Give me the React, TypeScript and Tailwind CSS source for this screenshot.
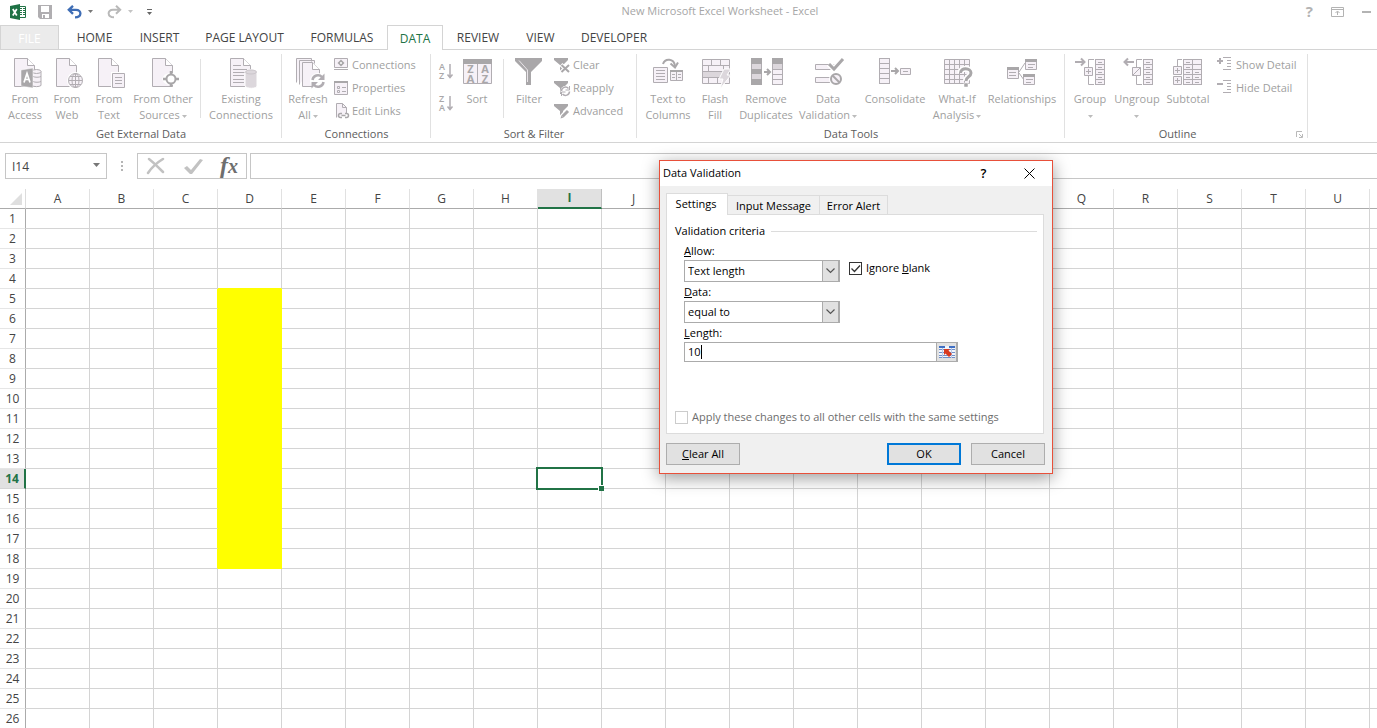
import { useState } from "react";
import type { ReactNode } from "react";

const COLUMNS = "ABCDEFGHIJKLMNOPQRSTU".split("");
const ROWS = Array.from({ length: 26 }, (_, i) => i + 1);

const LINE = "#b1adb2";
const PALE = "#f6f1f7";
const DARK = "#a9a7a9";
const MID = "#dcd7dc";

/* ---------- Icon pieces ---------- */

function Icon({ size = 32, children }: { size?: number; children: ReactNode }) {
  return (
    <svg
      width={size}
      height={size}
      viewBox={`0 0 ${size} ${size}`}
      fill="none"
      stroke={LINE}
      overflow="visible"
      className="shrink-0"
      aria-hidden="true"
    >
      {children}
    </svg>
  );
}

function Page() {
  return (
    <>
      <path d="M5.5 1.5h13l7 7v21h-20z" fill={PALE} />
      <path d="M18.5 1.5v7h7" fill="#fff" />
    </>
  );
}

function Cells({ x, y, w, h, rows, dash = false }: { x: number; y: number; w: number; h: number; rows: number; dash?: boolean }) {
  return (
    <>
      {Array.from({ length: rows }, (_, i) => (
        <g key={i}>
          <rect x={x + 0.5} y={y + i * h + 0.5} width={w} height={h} fill={PALE} />
          {dash && <path d={`M${x + 3} ${y + i * h + 3.5}h${w - 5}`} />}
        </g>
      ))}
    </>
  );
}

const AccessIcon = () => (
  <Icon>
    <Page />
    <path d="M23 14.5v14c2 1.500 7 1.500 9 0v-14" fill={PALE} />
    <ellipse cx="27.5" cy="14.5" rx="4.5" ry="2" fill={PALE} />
    <path d="M24 19.5c2 1 6 1 8 0M24 24.5c2 1 6 1 8 0" />
    <path d="M12 13l12-2v20l-12-2z" fill={DARK} stroke="#fff" strokeWidth="0.5" />
    <path d="M15 25.500l3-9 3 9M16 22.5h4" stroke="#fff" strokeWidth="1.7" />
  </Icon>
);

const WebIcon = () => (
  <Icon>
    <Page />
    <circle cx="24.5" cy="23.5" r="8.5" fill="#fff" stroke="none" />
    <circle cx="24.5" cy="23.5" r="7" fill={PALE} />
    <ellipse cx="24.5" cy="23.5" rx="3.5" ry="7" />
    <path d="M24.5 16.500v14M17.5 23.500h14M19 19.500h11M19 27.500h11" />
  </Icon>
);

const TextIcon = () => (
  <Icon>
    <Page />
    <path d="M18 15h14v17H18z" fill="#fff" stroke="none" />
    <path d="M19.5 16.500h12v14h-12z" fill={PALE} />
    <path d="M22 20.5h7M22 23.5h7M22 26.5h7" />
  </Icon>
);

const OtherIcon = () => (
  <Icon>
    <Page />
    <path d="M15 22a9 9 0 0 1 17 0 9 9 0 0 1-17 0" fill="#fff" stroke="none" />
    <circle cx="24" cy="22" r="4.5" strokeWidth="2" stroke={DARK} fill="#fff" />
    <path d="M24 14v4M24 26v4M16 22h4M28 22h4" strokeWidth="2.5" stroke={DARK} />
  </Icon>
);

const ExistingIcon = () => (
  <Icon>
    <Page />
    <path d="M8 8.5h8M8 12.5h14M8 15.5h14M8 18.5h11M8 22.5h11M8 25.5h11" />
    <path d="M20 15v14c1 3 12 3 12 0V15c0-3-12-3-12 0" fill={MID} stroke="#fff" />
    <ellipse cx="26" cy="15" rx="5.5" ry="2" fill={MID} stroke="#cbc6cb" />
  </Icon>
);

const RefreshIcon = () => (
  <Icon>
    <path d="M4.5 25.5v-24h15v3M7.5 27.5v-24h15v3" fill={PALE} />
    <path d="M10.5 5.5h10l7 7v17h-17z" fill={PALE} />
    <path d="M20.5 5.5v7h7" fill="#fff" />
    <circle cx="26" cy="24" r="8" fill="#fff" stroke="none" />
    <path d="M20.5 23a5.5 5.500 0 0 1 9.500-3M31.5 25a5.500 5.500 0 0 1-9.500 3" strokeWidth="2.5" />
    <path d="M32.5 16.500v6.500H26zM19.5 31.500V25H26z" fill={LINE} stroke="none" />
  </Icon>
);

const SortIcon = () => (
  <Icon>
    <path d="M2.5 3.5h28v23h-28z" fill={PALE} />
    <path d="M2 2h29v5H2z" fill={DARK} stroke="none" />
    <path d="M16.5 7v20" />
    <g fill={DARK} stroke="none" fontSize="11" fontWeight="700" textAnchor="middle">
      <text x="9.5" y="16">Z</text>
      <text x="9.5" y="26">A</text>
      <text x="24" y="16">A</text>
      <text x="24" y="26">Z</text>
    </g>
  </Icon>
);

const FilterIcon = () => (
  <Icon>
    <path d="M2 1h27v3L18 15v13h-5V15L2 4z" fill={DARK} stroke="none" />
    <path d="M6 3.5l8.5 9.500v12" stroke="#e9e5e9" />
  </Icon>
);

const TextToColumnsIcon = () => (
  <Icon>
    <path d="M1.5 10.5h14v15h-14z" fill={PALE} />
    <path d="M4 13.5h9M4 16.5h9M4 19.5h9M4 22.5h9" />
    <path d="M18.5 13.5h12v10h-12zM24.5 14v9M20 17.5h3M26 17.5h3M20 20.5h3M26 20.5h3" fill={PALE} />
    <path d="M18 14h13" strokeWidth="2" stroke={DARK} />
    <path d="M11 7c2-6 11-6 12 2" strokeWidth="2" stroke={DARK} />
    <path d="M18.5 6.500l4.500 4 3-5" strokeWidth="2" stroke={DARK} />
  </Icon>
);

const FlashFillIcon = () => (
  <Icon>
    <path d="M3.5 2.5h27v24h-27z" fill={PALE} />
    <path d="M4 15h26v5H4z" fill={MID} stroke="none" />
    <path d="M3.5 8.5h27M3.5 14.5h27M3.5 20.5h27M12.5 2.5v6M21.5 2.5v6M9.5 8.5v6M9.5 20.5v6M18.5 20.5v6M24.5 8.5v6" />
    <path d="M25 12h7l-4 6h4L21 32l3-10h-4z" fill={MID} stroke="#fff" />
  </Icon>
);

const RemoveDuplicatesIcon = () => (
  <Icon>
    <Cells x={1} y={1} w={10} h={5} rows={5} />
    <path d="M1 1h11v6H1zM1 12h11v5H1zM1 22h11v6H1z" fill={DARK} stroke="none" />
    <path d="M2 7h9v5H2zM2 17h9v5H2z" fill={MID} stroke="none" />
    <Cells x={22} y={2} w={10} h={5} rows={5} />
    <path d="M22 1h11v6H22z" fill={DARK} stroke="none" />
    <path d="M23 7h9v5h-9z" fill={MID} stroke="none" />
    <path d="M14 15h6M17 12l3 3-3 3" strokeWidth="2" stroke={DARK} />
  </Icon>
);

const ValidationIcon = () => (
  <Icon>
    <path d="M3.5 7.5h20v5h-20zM3.5 20.5h18v5h-18z" fill={PALE} />
    <path d="M17 7l5 5 9-10" stroke="#fff" strokeWidth="6" />
    <path d="M17 7l5 5 9-10" stroke={DARK} strokeWidth="3" />
    <circle cx="24" cy="22" r="7" fill="#fff" stroke="none" />
    <circle cx="24" cy="22" r="5" stroke={DARK} strokeWidth="2" fill={PALE} />
    <path d="M20.5 18.500l7 7" stroke={DARK} strokeWidth="2" />
  </Icon>
);

const ConsolidateIcon = () => (
  <Icon>
    <Cells x={0} y={1} w={10} h={5} rows={5} />
    <path d="M12 14h7M16 11l3 3-3 3" strokeWidth="2" stroke={DARK} />
    <path d="M21.5 11.5h10v6h-10zM24 14.5h5" fill={PALE} />
  </Icon>
);

const WhatIfIcon = () => (
  <Icon>
    <path d="M3.5 2.5h25v24h-25z" fill={PALE} />
    <path d="M8.5 2.5v24M13.5 2.5v24M18.5 2.5v24M23.5 2.5v24M3.5 7.5h25M3.5 12.5h25M3.5 17.5h25M3.5 22.5h25" />
    <path d="M19.5 16c0-6 10.500-5.500 10.500 0 0 4-5 3.500-5 8" strokeWidth="6" stroke="#fff" />
    <path d="M19.5 16c0-6 10.500-5.500 10.500 0 0 4-5 3.500-5 8" strokeWidth="3" stroke={DARK} />
    <path d="M23 26h4v4h-4z" fill={DARK} stroke="#fff" strokeWidth="0.5" />
  </Icon>
);

const RelationshipsIcon = () => (
  <Icon>
    <path d="M13 15l6-9M13 16l5 7" />
    <path d="M1.5 11.5h11v10h-11zM19.5 3.5h11v9h-11zM17.5 18.5h11v9h-11z" fill={PALE} />
    <path d="M1 11.5h12M19 3.5h12M17 18.5h12" strokeWidth="3" stroke={DARK} />
    <path d="M3 15.5h7M3 18.5h7M22 7.5h7M22 10.5h5M20 22.5h7M20 25.5h5" />
  </Icon>
);

const GroupIcon = () => (
  <Icon>
    <path d="M1 5h10M7 1.5L10.5 5 7 8.5" strokeWidth="2" />
    <path d="M20 2.5h-5.500v25H20" />
    <path d="M10.5 10.5h8v8h-8z" fill={PALE} />
    <path d="M12 14.5h5M14.5 12v5" />
    <Cells x={21} y={2} w={9} h={5} rows={5} dash />
  </Icon>
);

const UngroupIcon = () => (
  <Icon>
    <path d="M13 5H3M7 1.5L3.5 5 7 8.5" strokeWidth="2" />
    <path d="M21 2.5h-5.500v25H21" />
    <path d="M11.5 10.5h8v8h-8z" fill={PALE} />
    <path d="M11.5 18.5l8-8" />
    <Cells x={22} y={2} w={9} h={5} rows={5} dash />
  </Icon>
);

const SubtotalIcon = () => (
  <Icon>
    <path d="M10 2.5H5.5V9" />
    <path d="M1.5 9.5h8v8h-8zM1.5 19.5h8v8h-8z" fill={PALE} />
    <path d="M3 13.5h5M5.5 11v5M3 23.5h5M5.5 21v5" />
    <Cells x={11} y={2} w={9} h={5} rows={5} dash />
    <Cells x={20} y={2} w={9} h={5} rows={5} />
    <path d="M23 15.5h4M23 20.5h4M23 25.5h4" />
  </Icon>
);

const ConnectionsIcon = () => (
  <Icon size={16}>
    <path d="M1.5 1.5h13v9h-13z" fill={PALE} />
    <path d="M1 12.5h14" />
    <path d="M8 2.500l3.500 3.500L8 9.500 4.500 6z" fill={DARK} stroke="none" />
    <circle cx="8" cy="6" r="1" fill="#fff" stroke="none" />
  </Icon>
);

const PropertiesIcon = () => (
  <Icon size={16}>
    <path d="M1.5 1.5h13v13h-13z" fill={PALE} />
    <path d="M1 2h14" strokeWidth="2" stroke={DARK} />
    <path d="M4.5 6.5h2v2h-2zM4.5 10.5h2v2h-2zM9 7.5h4M9 11.5h4" />
  </Icon>
);

const EditLinksIcon = () => (
  <Icon size={16}>
    <path d="M3.5 14.5v-14h6l4 4v6" fill={PALE} />
    <path d="M9.5.5v4h4" />
    <path d="M9 10.5H7.500a2 2 0 0 0 0 4H9M12 10.5h1.500a2 2 0 0 1 0 4H12M8.5 12.5h4" strokeWidth="1.5" stroke={DARK} />
  </Icon>
);

const SmallFunnel = () => <path d="M0 1h14v2L9 8v6H6V8L0 3z" fill={DARK} stroke="none" />;

const ClearIcon = () => (
  <Icon size={16}>
    <SmallFunnel />
    <path d="M7 7.500l8 8M15 7.500l-8 8" stroke="#fff" strokeWidth="4" />
    <path d="M7.5 8l7.500 7M15 8l-7.500 7" stroke={DARK} strokeWidth="2" />
  </Icon>
);

const ReapplyIcon = () => (
  <Icon size={16}>
    <SmallFunnel />
    <circle cx="11.5" cy="11" r="5" fill="#fff" stroke="none" />
    <path d="M7.5 11a4 4 0 0 1 7-2.500M15.5 11.500a4 4 0 0 1-7 2.500" strokeWidth="1.5" />
    <path d="M15.5 6v4h-4M7.5 16v-4h4" />
  </Icon>
);

const AdvancedIcon = () => (
  <Icon size={16}>
    <SmallFunnel />
    <path d="M7 15.500L15 7" stroke="#fff" strokeWidth="6" />
    <path d="M8.5 13.500L14 8" stroke={DARK} strokeWidth="3" />
    <path d="M6.5 15.500l1-3 2 2z" fill={DARK} stroke="none" />
  </Icon>
);

function DetailIcon({ plus }: { plus?: boolean }) {
  return (
    <Icon size={16}>
      <path d={plus ? "M0 4h6M3 1v6" : "M0 4h6"} strokeWidth="2" />
      <path d="M6 .5h8M10 3.5h4M10 6.5h4M10 9.5h4M6 12.5h8" />
    </Icon>
  );
}

function SortOrderIcon({ top, bottom }: { top: string; bottom: string }) {
  return (
    <Icon size={16}>
      <g fill={DARK} stroke="none" fontSize="9" fontWeight="600">
        <text x="0" y="7">{top}</text>
        <text x="0" y="16">{bottom}</text>
      </g>
      <path d="M11 1v13M8.500 11.500l2.500 3 2.500-3" strokeWidth="1.5" />
    </Icon>
  );
}

function Caret({ className = "text-[#c4c4c4]" }: { className?: string }) {
  return (
    <svg width="5" height="3" viewBox="0 0 5 3" className={`inline-block align-middle ${className}`} aria-hidden="true">
      <path d="M0 0h5L2.500 3z" fill="currentColor" />
    </svg>
  );
}

/* ---------- Ribbon ---------- */

type BigButtonProps = { icon: ReactNode; lines: string[]; width: string; caret?: boolean };

function BigButton({ icon, lines, width, caret }: BigButtonProps) {
  return (
    <button className={`flex shrink-0 flex-col items-center ${width}`}>
      {icon}
      <span className="mt-0.5 whitespace-nowrap leading-4">
        {lines[0]}
        <br />
        {lines[1]}
        {caret && <Caret className={lines[1] ? "ml-0.5 text-[#bcbcbc]" : "text-[#bcbcbc]"} />}
      </span>
    </button>
  );
}

function SmallButton({ icon, label }: { icon: ReactNode; label: string }) {
  return (
    <button className="flex h-[23px] items-center gap-[3px] whitespace-nowrap leading-4">
      {icon}
      {label}
    </button>
  );
}

type RibbonGroupProps = { label: string; width: string; launcher?: boolean; children: ReactNode };

function RibbonGroup({ label, width, launcher, children }: RibbonGroupProps) {
  return (
    <section className={`relative flex shrink-0 flex-col ${width}`}>
      <div className="flex h-[76px] px-1 pt-[7px]">{children}</div>
      <h2 className={`text-center leading-4 text-[#5c5c5c] ${launcher ? "pr-[18px]" : ""}`}>{label}</h2>
      {launcher && (
        <button aria-label={`${label} settings`} className="absolute right-[5px] bottom-1">
          <svg width="7" height="7" viewBox="0 0 7 7" fill="none" stroke="#b9b9b9" aria-hidden="true">
            <path d="M.5 6V.5H6M3 3l3 3M6.5 3v3.500H3" />
          </svg>
        </button>
      )}
      <span className="absolute top-1 right-0 bottom-1 w-px bg-[#e1e1e1]" />
    </section>
  );
}

const Divider = () => <span className="mx-1 mt-0.5 mb-2 w-px shrink-0 bg-[#e1e1e1]" />;

function Ribbon() {
  return (
    <div className="flex h-[93px] shrink-0 overflow-hidden border-b border-[#d4d4d4] text-[11px] text-[#9f9f9f]">
      <RibbonGroup label="Get External Data" width="w-[282px]">
        <BigButton icon={<AccessIcon />} lines={["From", "Access"]} width="w-[42px]" />
        <BigButton icon={<WebIcon />} lines={["From", "Web"]} width="w-[42px]" />
        <BigButton icon={<TextIcon />} lines={["From", "Text"]} width="w-[42px]" />
        <BigButton icon={<OtherIcon />} lines={["From Other", "Sources"]} width="w-[66px]" caret />
        <Divider />
        <BigButton icon={<ExistingIcon />} lines={["Existing", "Connections"]} width="w-[72px]" />
      </RibbonGroup>
      <RibbonGroup label="Connections" width="w-[149px]">
        <BigButton icon={<RefreshIcon />} lines={["Refresh", "All"]} width="w-[44px]" caret />
        <div className="-mt-1 ml-[3px] flex flex-col">
          <SmallButton icon={<ConnectionsIcon />} label="Connections" />
          <SmallButton icon={<PropertiesIcon />} label="Properties" />
          <SmallButton icon={<EditLinksIcon />} label="Edit Links" />
        </div>
      </RibbonGroup>
      <RibbonGroup label="Sort & Filter" width="w-[206px]">
        <div className="mt-1.5 ml-1 flex flex-col gap-4">
          <button aria-label="Sort A to Z"><SortOrderIcon top="A" bottom="Z" /></button>
          <button aria-label="Sort Z to A"><SortOrderIcon top="Z" bottom="A" /></button>
        </div>
        <BigButton icon={<SortIcon />} lines={["Sort"]} width="w-[44px]" />
        <Divider />
        <BigButton icon={<FilterIcon />} lines={["Filter"]} width="w-[42px]" />
        <div className="-mt-1 ml-1 flex flex-col">
          <SmallButton icon={<ClearIcon />} label="Clear" />
          <SmallButton icon={<ReapplyIcon />} label="Reapply" />
          <SmallButton icon={<AdvancedIcon />} label="Advanced" />
        </div>
      </RibbonGroup>
      <RibbonGroup label="Data Tools" width="w-[428px]">
        <BigButton icon={<TextToColumnsIcon />} lines={["Text to", "Columns"]} width="w-[54px]" />
        <BigButton icon={<FlashFillIcon />} lines={["Flash", "Fill"]} width="w-[40px]" />
        <BigButton icon={<RemoveDuplicatesIcon />} lines={["Remove", "Duplicates"]} width="w-[62px]" />
        <BigButton icon={<ValidationIcon />} lines={["Data", "Validation"]} width="w-[62px]" caret />
        <BigButton icon={<ConsolidateIcon />} lines={["Consolidate"]} width="w-[72px]" />
        <BigButton icon={<WhatIfIcon />} lines={["What-If", "Analysis"]} width="w-[52px]" caret />
        <BigButton icon={<RelationshipsIcon />} lines={["Relationships"]} width="w-[78px]" />
      </RibbonGroup>
      <RibbonGroup label="Outline" width="w-[243px]" launcher>
        <BigButton icon={<GroupIcon />} lines={["Group"]} width="w-[42px]" caret />
        <BigButton icon={<UngroupIcon />} lines={["Ungroup"]} width="w-[52px]" caret />
        <BigButton icon={<SubtotalIcon />} lines={["Subtotal"]} width="w-[50px]" />
        <div className="-mt-1 ml-1 flex flex-col">
          <SmallButton icon={<DetailIcon plus />} label="Show Detail" />
          <SmallButton icon={<DetailIcon />} label="Hide Detail" />
        </div>
      </RibbonGroup>
    </div>
  );
}

/* ---------- Title bar and tabs ---------- */

function TitleBar() {
  return (
    <header className="relative flex h-[25px] shrink-0 items-center justify-between pr-1.5 pb-0.5 pl-2">
      <div className="flex items-center">
        <svg width="18" height="16" viewBox="0 0 18 16" className="mx-0.5" aria-hidden="true">
          <path d="M8 2.5h7.500v11H8z" fill="#fff" stroke="#217346" />
          <path d="M10 4.5h2M13 4.5h2M10 6.5h2M13 6.500h2M10 8.5h2M13 8.500h2M10 10.5h2M13 10.500h2" stroke="#217346" />
          <path d="M0 2l10-2v16L0 14z" fill="#1e7145" />
          <path d="M2.800 5l4 6.500M6.800 5l-4 6.500" stroke="#fff" strokeWidth="1.7" />
        </svg>
        <button aria-label="Save" className="ml-2">
          <svg width="14" height="14" viewBox="0 0 14 14" aria-hidden="true">
            <path d="M0 0h14v14H2l-2-2z" fill="#b0aeb1" />
            <path d="M3 1h8v6H3z" fill="#fff" />
            <path d="M4 9h7v4H4z" fill="#fff" />
            <path d="M5 10h2v3H5z" fill="#b0aeb1" />
          </svg>
        </button>
        <button aria-label="Undo" className="ml-[15px] flex items-center gap-1.5">
          <svg width="15" height="14" viewBox="0 0 15 14" fill="none" stroke="#3e6db5" strokeWidth="2.3" aria-hidden="true">
            <path d="M6 .8L1.800 4.800 6 8.800M2 4.800h7c6 0 6 7.500-1 7.500" />
          </svg>
          <Caret className="text-[#777777]" />
        </button>
        <button aria-label="Redo" className="ml-[14px] flex items-center gap-1.5">
          <svg width="15" height="14" viewBox="0 0 15 14" fill="none" stroke="#b9b9b9" strokeWidth="2" aria-hidden="true">
            <path d="M9 .8l4.200 4L9 8.800M13 4.800H6c-6 0-6 7.500 1 7.500" />
          </svg>
          <Caret />
        </button>
        <button aria-label="Customize toolbar" className="ml-3.5">
          <svg width="5" height="6" viewBox="0 0 5 6" aria-hidden="true">
            <path d="M0 0h5v1H0zM0 3h5L2.500 6z" fill="#666" />
          </svg>
        </button>
      </div>
      <h1 className="flex-1 pr-[18px] text-center text-[11px] text-[#a6a6a6]">New Microsoft Excel Worksheet - Excel</h1>
      <div className="flex items-center gap-[18px] text-[#b3b3b3]">
        <button aria-label="Help" className="text-[15px] leading-none font-bold">?</button>
        <button aria-label="Ribbon display options">
          <svg width="13" height="10" viewBox="0 0 13 10" fill="none" stroke="currentColor" aria-hidden="true">
            <path d="M.5.5h12v9H.500zM1 2.500h11M6.500 8V4.500M4.500 6l2-2 2 2" />
          </svg>
        </button>
        <button aria-label="Minimize" className="h-0.5 w-[9px] bg-[#b3b3b3]" />
      </div>
    </header>
  );
}

const TABS = [
  { name: "HOME", width: "w-[65px]" },
  { name: "INSERT", width: "w-[65px]" },
  { name: "PAGE LAYOUT", width: "w-[105px]" },
  { name: "FORMULAS", width: "w-[90px]" },
  { name: "DATA", width: "w-[56px]" },
  { name: "REVIEW", width: "w-[70px]" },
  { name: "VIEW", width: "w-[55px]" },
  { name: "DEVELOPER", width: "w-[92px]" },
];

function TabStrip() {
  return (
    <nav className="flex h-[25px] shrink-0 text-xs text-[#444444]">
      <button className="w-[59px] border border-[#d4d4d4] bg-[#ebebeb] pt-0.5 text-white">FILE</button>
      <span className="w-[3px] border-b border-[#d4d4d4]" />
      {TABS.map((tab) => (
        <button
          key={tab.name}
          className={`pt-0.5 whitespace-nowrap ${tab.width} ${
            tab.name === "DATA"
              ? "border border-b-0 border-[#d4d4d4] text-[#217346]"
              : "border-b border-[#d4d4d4]"
          }`}
        >
          {tab.name}
        </button>
      ))}
      <span className="flex-1 border-b border-[#d4d4d4]" />
    </nav>
  );
}

/* ---------- Formula bar ---------- */

function FormulaBar() {
  return (
    <div className="flex h-[46px] shrink-0 items-start pt-[10px] pl-[5px] text-xs text-[#444444]">
      <div className="flex h-[26px] w-[102px] items-center border border-[#c6c6c6]">
        <input aria-label="Name box" defaultValue="I14" className="w-0 flex-1 pt-px pl-1.5 outline-none" />
        <button aria-label="Cell names" className="flex pr-1.5 pb-0.5">
          <svg width="7" height="4" viewBox="0 0 7 4" aria-hidden="true">
            <path d="M0 0h7L3.500 4z" fill="#777" />
          </svg>
        </button>
      </div>
      <span className="flex h-[26px] w-[30px] flex-col items-center justify-center gap-0.5">
        <i className="size-0.5 bg-[#b5b5b5]" />
        <i className="size-0.5 bg-[#b5b5b5]" />
        <i className="size-0.5 bg-[#b5b5b5]" />
      </span>
      <div className="flex h-[26px] w-[110px] items-center justify-between border border-[#c6c6c6] px-2">
        <button aria-label="Cancel entry">
          <svg width="20" height="18" viewBox="0 0 20 18" fill="none" stroke="#c2c2c2" strokeLinecap="round" aria-hidden="true">
            <path d="M3 2c4 3 9 8 14 13" strokeWidth="2.5" />
            <path d="M17 2C12 5 6 10 2 16" strokeWidth="2.5" />
          </svg>
        </button>
        <button aria-label="Accept entry">
          <svg width="20" height="18" viewBox="0 0 20 18" aria-hidden="true">
            <path d="M1 11l3-2 4 4 9-11 3 1L9 17H7z" fill="#c2c2c2" />
          </svg>
        </button>
        <button aria-label="Insert function" className="font-['Liberation_Serif',serif] text-2xl leading-none font-bold text-[#6e6e6e] italic">
          f<span className="text-xl">x</span>
        </button>
      </div>
      <input aria-label="Formula" className="ml-[3px] h-[26px] min-w-0 flex-1 border border-r-0 border-[#c6c6c6] px-2 outline-none" />
    </div>
  );
}

/* ---------- Sheet ---------- */

const ACTIVE_COL = "I";
const ACTIVE_ROW = 14;

function isFilled(col: string, row: number) {
  return col === "D" && row >= 5 && row <= 18;
}

function cellStyle(col: string, row: number) {
  if (isFilled(col, row)) return "border-[#ffff00] bg-[#ffff00]";
  // the filled range also covers the lines that it shares with its neighbours
  const right = col === "C" && row >= 5 && row <= 18 ? "border-r-[#ffff00]" : "border-r-[#d4d4d4]";
  const bottom = col === "D" && row === 4 ? "border-b-[#ffff00]" : "border-b-[#d4d4d4]";
  return `${right} ${bottom}`;
}

function Sheet() {
  return (
    <div className="min-h-0 flex-1 overflow-hidden">
      <table className="w-full table-fixed border-separate border-spacing-0 text-xs text-[#444444]">
        <colgroup>
          <col className="w-[26px]" />
          {COLUMNS.map((col) => (
            <col key={col} className="w-16" />
          ))}
          <col />
        </colgroup>
        <thead>
          <tr className="h-5">
            <th className="border-r border-b border-r-[#dcdcdc] border-b-[#ababab] p-0">
              <svg width="12" height="12" viewBox="0 0 12 12" className="mr-[3px] ml-auto" aria-hidden="true">
                <path d="M12 0v12H0z" fill="#dfdfdf" />
              </svg>
            </th>
            {COLUMNS.map((col) => (
              <th
                key={col}
                scope="col"
                className={`border-r p-0 leading-[18px] ${
                  col === ACTIVE_COL
                    ? "border-b-2 border-r-[#c0c0c0] border-b-[#217346] bg-[#e1e1e1] font-bold text-[#217346]"
                    : "border-b border-r-[#e1e1e1] border-b-[#ababab] font-normal"
                }`}
              >
                {col}
              </th>
            ))}
            <th className="border-b border-[#ababab] p-0" />
          </tr>
        </thead>
        <tbody>
          {ROWS.map((row) => (
            <tr key={row} className="h-5">
              <th
                scope="row"
                className={`border-b px-0 pt-px pb-0 leading-[18px] ${
                  row === ACTIVE_ROW
                    ? "border-r-2 border-r-[#217346] border-b-[#d4d4d4] bg-[#e1e1e1] font-bold text-[#217346]"
                    : "border-r border-r-[#ababab] border-b-[#e6e6e6] font-normal"
                }`}
              >
                {row}
              </th>
              {COLUMNS.map((col) => (
                <td key={col} className={`relative border-r border-b p-0 ${cellStyle(col, row)}`}>
                  {col === ACTIVE_COL && row === ACTIVE_ROW && (
                    <span className="absolute -inset-0.5 z-10 border-2 border-[#217346]">
                      <i className="absolute -right-[3px] -bottom-[3px] size-1.5 border-t border-l border-white bg-[#217346]" />
                    </span>
                  )}
                </td>
              ))}
              <td className="border-b border-[#d4d4d4] p-0" />
            </tr>
          ))}
        </tbody>
      </table>
    </div>
  );
}

/* ---------- Data validation dialog ---------- */

function Dropdown({ id, options }: { id: string; options: string[] }) {
  return (
    <div className="relative h-[22px] w-[156px]">
      <select id={id} className="size-full appearance-none border border-[#ababab] bg-white pl-[3px] outline-none">
        {options.map((option) => (
          <option key={option}>{option}</option>
        ))}
      </select>
      <span className="pointer-events-none absolute inset-y-0 right-0 flex w-[18px] items-center justify-center border border-r-2 border-[#ababab] bg-[#e1e1e1]">
        <svg width="9" height="6" viewBox="0 0 9 6" fill="none" stroke="#555" strokeWidth="1.2" aria-hidden="true">
          <path d="M.5.5l4 4 4-4" />
        </svg>
      </span>
    </div>
  );
}

function DialogButton({ children, primary }: { children: ReactNode; primary?: boolean }) {
  return (
    <button
      className={`h-[22px] w-[74px] bg-[#e1e1e1] leading-4 ${
        primary ? "border-2 border-[#0078d7]" : "border border-[#adadad]"
      }`}
    >
      {children}
    </button>
  );
}

function DataValidationDialog() {
  const [length, setLength] = useState("10");
  const [ignoreBlank, setIgnoreBlank] = useState(true);

  return (
    <div
      role="dialog"
      aria-label="Data Validation"
      className="absolute top-[160px] left-[659px] z-20 w-[394px] border border-[#e8503a] bg-[#f0f0f0] text-[11px] text-black shadow-[0_4px_16px_rgba(0,0,0,0.4)]"
    >
      <div className="flex h-[25px] items-center bg-white pl-[3px]">
        <h2 className="flex-1">Data Validation</h2>
        <button aria-label="Help" className="w-[45px] text-[13px] font-semibold">?</button>
        <button aria-label="Close" className="flex w-[46px] justify-center">
          <svg width="11" height="11" viewBox="0 0 11 11" stroke="#000" aria-hidden="true">
            <path d="M.5.5l10 10M10.5.5l-10 10" />
          </svg>
        </button>
      </div>

      <div className="px-1.5 pt-[7px] pb-2">
        <div role="tablist" className="flex items-end">
          <button role="tab" aria-selected="true" className="relative z-10 -mb-px h-[22px] w-[62px] border border-b-0 border-[#dcdcdc] bg-white pr-0.5">
            Settings
          </button>
          <button role="tab" className="h-[19px] w-[92px] border-t border-r border-[#dcdcdc] pt-0.5 leading-4">Input Message</button>
          <button role="tab" className="h-[19px] w-[68px] border-t border-r border-[#dcdcdc] pt-0.5 leading-4">Error Alert</button>
        </div>

        <div className="h-[220px] border border-[#dcdcdc] bg-white pt-2 pr-1.5 pl-2 mr-0.5">
          <fieldset className="min-w-0">
            <div className="flex h-4 items-center gap-1.5">
              <span>Validation criteria</span>
              <span className="h-px flex-1 bg-[#dcdcdc]" />
            </div>
            <div className="flex pt-1 pl-[9px]">
              <div>
                <label htmlFor="allow" className="block h-[17px] leading-4"><u>A</u>llow:</label>
                <Dropdown id="allow" options={["Text length", "Any value", "Whole number", "Decimal", "List"]} />
                <label htmlFor="data" className="mt-0.5 block h-[17px] leading-4"><u>D</u>ata:</label>
                <Dropdown id="data" options={["equal to", "not equal to", "greater than", "less than"]} />
              </div>
              <label className="mt-[15px] ml-[9px] flex h-5 items-center gap-1">
                <span className="relative size-[13px]">
                  <input
                    type="checkbox"
                    checked={ignoreBlank}
                    onChange={(e) => setIgnoreBlank(e.target.checked)}
                    className="block size-[13px] appearance-none border border-[#333333] bg-white"
                  />
                  {ignoreBlank && (
                    <svg width="13" height="13" viewBox="0 0 13 13" fill="none" stroke="#333" strokeWidth="1.3" className="pointer-events-none absolute inset-0" aria-hidden="true">
                      <path d="M2.5 6.500l3 3 5.500-6" />
                    </svg>
                  )}
                </span>
                <span>Ignore <u>b</u>lank</span>
              </label>
            </div>
            <div className="pt-0.5 pl-[9px]">
              <label htmlFor="length" className="block h-[17px] leading-4"><u>L</u>ength:</label>
              <div className="flex h-5">
                <div className="flex w-[252px] border border-r-0 border-[#ababab]">
                  <input
                    id="length"
                    value={length}
                    onChange={(e) => setLength(e.target.value)}
                    className="w-4 bg-white pl-[3px] outline-none"
                  />
                  <span className="my-0.5 w-px bg-black" />
                </div>
                <button aria-label="Select range" className="flex w-[22px] items-center justify-center border border-r-2 border-[#ababab] bg-[#e1e1e1]">
                  <svg width="16" height="12" viewBox="0 0 16 12" aria-hidden="true">
                    <path d="M0 0h16v12H0z" fill="#f1f4fb" />
                    <path d="M0 0h6v2H0zM10 0h6v2h-6z" fill="#3f6fc4" />
                    <path d="M0 3.5h16M0 6.5h16M0 9.5h16M0 11.500h16" stroke="#6f8fc8" />
                    <path d="M3.5 2v10M12.5 2v10" stroke="#b9c8e6" />
                    <path d="M5 3h6L9.500 4.500 13 8l-3 3-3.500-3.500L5 9z" fill="#d8391f" />
                  </svg>
                </button>
              </div>
            </div>
          </fieldset>
          <label className="mt-[47px] flex h-4 items-center gap-1 text-[#6d6d6d]">
            <input type="checkbox" disabled className="size-[13px] appearance-none border border-[#cccccc] bg-white" />
            Apply these changes to all other cells with the same settings
          </label>
        </div>

        <div className="mt-[9px] mr-px flex gap-2.5">
          <DialogButton><u>C</u>lear All</DialogButton>
          <span className="flex-1" />
          <DialogButton primary>OK</DialogButton>
          <DialogButton>Cancel</DialogButton>
        </div>
      </div>
    </div>
  );
}

export default function App() {
  return (
    <div className="relative flex h-screen flex-col overflow-hidden bg-white font-['Open_Sans','Noto_Sans',sans-serif]">
      <TitleBar />
      <TabStrip />
      <Ribbon />
      <FormulaBar />
      <Sheet />
      <DataValidationDialog />
    </div>
  );
}
